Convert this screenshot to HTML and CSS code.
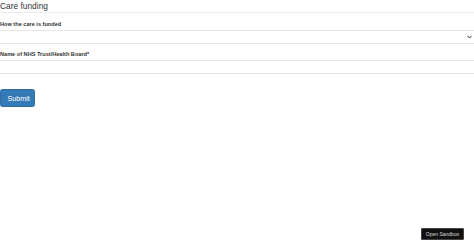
FILE: index.html
```html
<!DOCTYPE html>
<html>
<head>
<meta charset="utf-8">
<link rel="stylesheet" href="styles.css">
</head>
<body>
<form class="form">
  <fieldset class="fieldset">
    <legend class="legend">Care funding</legend>
    <div class="group">
      <label class="label">How the care is funded</label>
      <div class="select">
        <svg class="chev" width="5" height="4" viewBox="0 0 5 4"><path d="M0.5 0.8 L2.5 3 L4.5 0.8" fill="none" stroke="#333" stroke-width="1"/></svg>
      </div>
    </div>
    <div class="group">
      <label class="label">Name of NHS Trust/Health Board*</label>
      <div class="input"></div>
    </div>
  </fieldset>
  <button type="button" class="submit">Submit</button>
</form>
<div class="sandbox">Open Sandbox</div>
</body>
</html>
```
FILE: styles.css
```css
html, body {
  margin: 0;
  padding: 0;
  background: #fff;
  font-family: "Liberation Sans", Arial, sans-serif;
  color: #333;
}
.form {
  display: flex;
  flex-direction: column;
  align-items: flex-start;
}
.fieldset {
  margin: 0;
  padding: 0;
  border: 0;
  width: 474px;
  min-width: 0;
}
.legend {
  display: block;
  width: 100%;
  padding: 0;
  margin: -1px 0 7px 0;
  font-size: 8.4px;
  line-height: 12px;
  height: 12px;
  color: #333;
  border-bottom: 1px solid #ececec;
  font-weight: 300;
  box-sizing: content-box;
}
.group {
  margin-bottom: 6px;
}
.label {
  display: block;
  font-size: 5.6px;
  font-weight: bold;
  line-height: 8px;
  margin-bottom: 2px;
  color: #333;
}
.select, .input {
  height: 12px;
  border: 1px solid #e6e6e6;
  border-left: 0;
  border-right: 0;
  background: #fff;
  position: relative;
}
.input {
  margin-top: 1px;
}
.chev {
  position: absolute;
  right: 2px;
  top: 4px;
}
.submit {
  margin-top: 9px;
  background: #337ab7;
  color: #fff;
  border: 1px solid #2e6da4;
  border-radius: 2.4px;
  font-family: "Liberation Sans", Arial, sans-serif;
  font-size: 7.2px;
  line-height: 9.6px;
  padding: 4px 6.4px;
  height: 18.4px;
  width: 35px;
  cursor: pointer;
}
.sandbox {
  position: fixed;
  left: 421px;
  top: 228px;
  width: 43px;
  height: 12px;
  background: #111;
  border: 1px solid #444;
  box-sizing: border-box;
  color: #ddd;
  font-size: 5px;
  line-height: 10px;
  text-align: center;
  border-radius: 1px;
}
```
